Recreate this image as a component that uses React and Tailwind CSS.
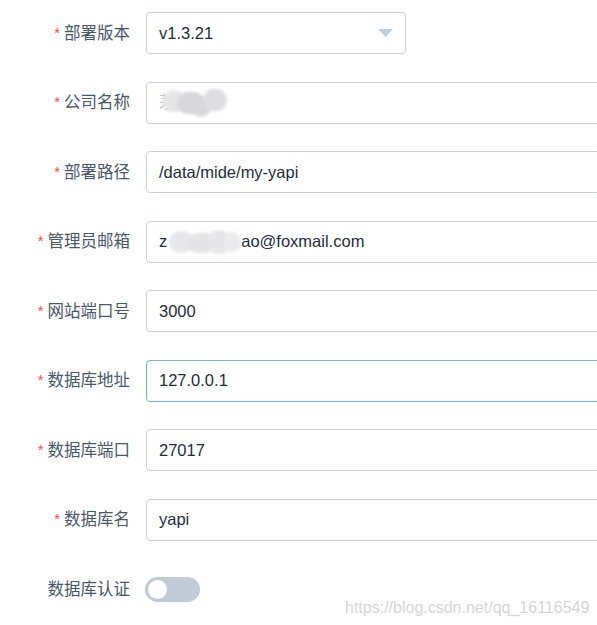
const font = { fontFamily: '"Liberation Sans", "Noto Sans CJK SC", sans-serif' };

const rows = [
  { label: "部署版本", value: "v1.3.21", select: true },
  { label: "公司名称", value: "", blur: "company" },
  { label: "部署路径", value: "/data/mide/my-yapi" },
  { label: "管理员邮箱", value: "email", blur: "email" },
  { label: "网站端口号", value: "3000" },
  { label: "数据库地址", value: "127.0.0.1", focus: true },
  { label: "数据库端口", value: "27017" },
  { label: "数据库名", value: "yapi" },
];

function Blob({ className }) {
  return <span className={`absolute rounded-full bg-[#d6d8dc] blur-[1.5px] ${className}`} />;
}

function Field({ row }) {
  if (row.select) {
    return (
      <div className="flex h-[42px] w-[260px] items-center justify-between rounded-[4px] border border-[#c8d1dc] bg-white pl-[12px] pr-[12px]">
        <span className="text-[16.5px] text-[#1f2d3d]">{row.value}</span>
        <svg width="15" height="8" viewBox="0 0 15 8">
          <path d="M0 0 L15 0 L7.5 8 Z" fill="#bfcbd9" />
        </svg>
      </div>
    );
  }
  return (
    <div
      className={`relative flex h-[42px] w-[500px] shrink-0 items-center rounded-[4px] border bg-white pl-[12px] ${
        row.focus ? "border-[#6cb2f7]" : "border-[#c8d1dc]"
      }`}
    >
      {row.blur === "company" && (
        <>
          <span className="text-[16.5px] text-[#c0c4cc]">茅</span>
          <Blob className="left-[16px] top-[7px] h-[22px] w-[22px] bg-[#e4e6e9]" />
          <Blob className="left-[30px] top-[9px] h-[22px] w-[28px]" />
          <Blob className="left-[44px] top-[14px] h-[20px] w-[20px]" />
          <Blob className="left-[56px] top-[6px] h-[22px] w-[24px] bg-[#dcdee1]" />
        </>
      )}
      {row.blur === "email" ? (
        <>
          <span className="text-[16.5px] text-[#1f2d3d]">z</span>
          <span className="w-[74px] shrink-0" />
          <span className="text-[16.5px] text-[#1f2d3d]">ao@foxmail.com</span>
          <Blob className="left-[22px] top-[9px] h-[22px] w-[24px] bg-[#e6e8eb]" />
          <Blob className="left-[40px] top-[11px] h-[20px] w-[28px] bg-[#e2e4e7]" />
          <Blob className="left-[60px] top-[8px] h-[24px] w-[24px] bg-[#e4e6e9]" />
          <Blob className="left-[76px] top-[10px] h-[20px] w-[18px] bg-[#e8eaed]" />
        </>
      ) : (
        row.value && <span className="text-[16.5px] text-[#1f2d3d]">{row.value}</span>
      )}
    </div>
  );
}

export default function App() {
  return (
    <div className="relative h-[625px] w-[597px] overflow-hidden bg-white" style={font}>
      <div className="flex flex-col gap-[27.5px] pt-[12px]">
        {rows.map((row) => (
          <div key={row.label} className="flex items-center">
            <div className="flex w-[131px] shrink-0 items-center justify-end pr-[1px]">
              <span className="mr-[4px] text-[15px] text-[#ff4949]">*</span>
              <span className="text-[16.5px] text-[#48576a]">{row.label}</span>
            </div>
            <div className="ml-[15px]">
              <Field row={row} />
            </div>
          </div>
        ))}
        <div className="flex h-[42px] items-center">
          <div className="flex w-[131px] shrink-0 justify-end pr-[1px]">
            <span className="text-[16.5px] text-[#48576a]">数据库认证</span>
          </div>
          <div className="ml-[14px] flex h-[25px] w-[55px] items-center rounded-full bg-[#bfcbd9] pl-[3px]">
            <span className="h-[19px] w-[19px] rounded-full bg-white" />
          </div>
        </div>
      </div>
      <span className="absolute left-[345px] top-[596px] text-[16px] text-[#d6d6d6]">https://blog.csdn.net/qq_16116549</span>
    </div>
  );
}
